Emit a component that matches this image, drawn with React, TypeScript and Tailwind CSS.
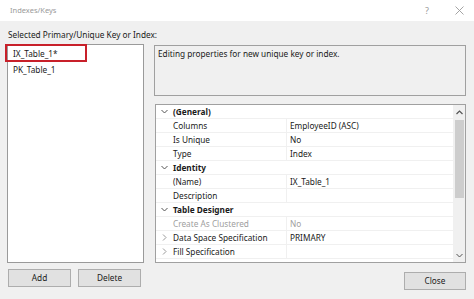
import React from "react";

const Down = ({ c = "#555" }: { c?: string }) => (
  <svg width="7" height="5" viewBox="0 0 7 5"><path d="M0.5 1 L3.5 4 L6.5 1" fill="none" stroke={c} strokeWidth="1" /></svg>
);
const Right = ({ c = "#999" }: { c?: string }) => (
  <svg width="5" height="7" viewBox="0 0 5 7"><path d="M1 0.5 L4 3.5 L1 6.5" fill="none" stroke={c} strokeWidth="1" /></svg>
);
const Up = ({ c = "#555" }: { c?: string }) => (
  <svg width="7" height="5" viewBox="0 0 7 5"><path d="M0.5 4 L3.5 1 L6.5 4" fill="none" stroke={c} strokeWidth="1.2" /></svg>
);

type Row =
  | { kind: "cat"; label: string }
  | { kind: "prop"; label: string; value?: string; disabled?: boolean; expand?: boolean };

const rows: Row[] = [
  { kind: "cat", label: "(General)" },
  { kind: "prop", label: "Columns", value: "EmployeeID (ASC)" },
  { kind: "prop", label: "Is Unique", value: "No" },
  { kind: "prop", label: "Type", value: "Index" },
  { kind: "cat", label: "Identity" },
  { kind: "prop", label: "(Name)", value: "IX_Table_1" },
  { kind: "prop", label: "Description", value: "" },
  { kind: "cat", label: "Table Designer" },
  { kind: "prop", label: "Create As Clustered", value: "No", disabled: true },
  { kind: "prop", label: "Data Space Specification", value: "PRIMARY", expand: true },
  { kind: "prop", label: "Fill Specification", value: "", expand: true },
];

export default function App() {
  return (
    <div
      className="w-[474px] h-[299px] bg-[#f0f0f0] flex flex-col overflow-hidden text-[8.25px] text-[#1a1a1a]"
      style={{ fontFamily: '"Noto Sans", "Open Sans", sans-serif' }}
    >
      {/* title bar */}
      <div className="h-[21px] bg-white flex items-center pl-[10px] pr-[10px] shrink-0">
        <span className="text-[7.5px] text-[#9a9a9a]">Indexes/Keys</span>
        <div className="ml-auto flex items-center">
          <span className="text-[9px] text-[#9a9a9a] mr-[26px]">?</span>
          <svg width="9" height="9" viewBox="0 0 9 9"><path d="M0.5 0.5 L8.5 8.5 M8.5 0.5 L0.5 8.5" stroke="#9a9a9a" strokeWidth="0.9" /></svg>
        </div>
      </div>

      <div className="flex-1 px-[7px]">
        <div className="h-[23px] pt-[7px] pl-[1px] leading-[14px]">Selected Primary/Unique Key or Index:</div>
        <div className="flex">
          {/* left column */}
          <div className="w-[137px] flex flex-col">
            <div className="relative h-[219px] bg-white border border-[#9a9a9a] pt-[1px]">
              <div className="h-[16px] leading-[16px] pl-[5px]">IX_Table_1*</div>
              <div className="h-[16px] leading-[16px] pl-[5px]">PK_Table_1</div>
              <div className="absolute left-[-3px] top-[-1px] w-[82px] h-[18px] border-2 border-[#c8202a]" />
            </div>
            <div className="flex gap-[7px] mt-[6px] pl-[1px]">
              <button className="w-[63px] h-[18px] bg-[#e1e1e1] border border-[#adadad] leading-[16px] text-center">Add</button>
              <button className="w-[63px] h-[18px] bg-[#e1e1e1] border border-[#adadad] leading-[16px] text-center">Delete</button>
            </div>
          </div>

          {/* right column */}
          <div className="ml-[10px] w-[312px] flex flex-col pt-[1px]">
            <div className="h-[51px] bg-[#f0f0f0] border border-[#a0a0a0] px-[3px] pt-[1px] leading-[14px]">
              Editing properties for new unique key or index.
            </div>
            <div className="ml-[1px] mt-[8px] h-[159px] bg-white border border-[#a0a0a0] flex">
              <div className="flex-1 flex flex-col">
                {rows.map((r, i) =>
                  r.kind === "cat" ? (
                    <div key={i} className="h-[14px] flex items-center border-b border-[#f0f0f0]">
                      <div className="w-[15px] flex justify-center pl-[1px]"><Down /></div>
                      <div className="pl-[2px] font-bold leading-[14px]">{r.label}</div>
                    </div>
                  ) : (
                    <div key={i} className="h-[14px] flex items-center border-b border-[#f0f0f0]">
                      <div className="w-[15px] flex justify-center pl-[2px]">{r.expand ? <Right /> : null}</div>
                      <div className={`w-[116px] h-full pl-[2px] leading-[14px] border-r border-[#f0f0f0] ${r.disabled ? "text-[#a0a0a0]" : ""}`}>{r.label}</div>
                      <div className={`flex-1 pl-[3px] leading-[14px] ${r.disabled ? "text-[#a0a0a0]" : ""}`}>{r.value}</div>
                    </div>
                  )
                )}
              </div>
              <div className="w-[12px] bg-[#f0f0f0] flex flex-col items-center">
                <div className="h-[14px] flex items-center justify-center"><Up /></div>
                <div className="w-[9px] h-[78px] bg-[#cdcdcd] mt-[1px]" />
                <div className="flex-1" />
                <div className="h-[14px] flex items-center justify-center"><Down c="#555" /></div>
              </div>
            </div>
            <div className="flex justify-end mt-[9px]">
              <button className="w-[62px] h-[18px] bg-[#e1e1e1] border border-[#adadad] leading-[16px] text-center">Close</button>
            </div>
          </div>
        </div>
      </div>
    </div>
  );
}
